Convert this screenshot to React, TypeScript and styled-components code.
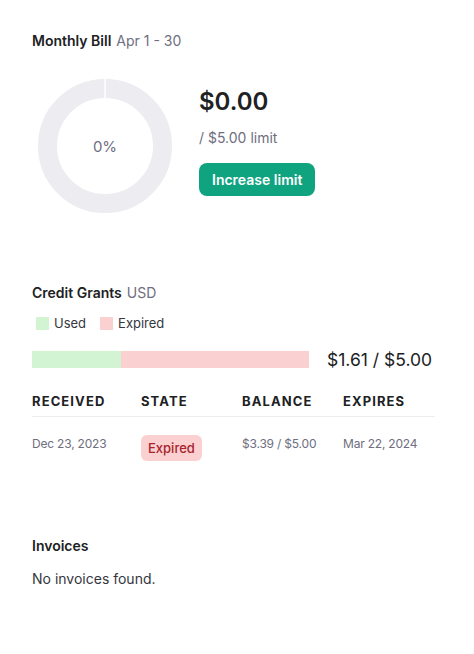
import React from 'react';
import styled, { createGlobalStyle } from 'styled-components';

const GlobalStyle = createGlobalStyle`
  body {
    margin: 0;
    background: #ffffff;
    font-family: Inter, 'Noto Sans', sans-serif;
    color: #202123;
  }
`;

const grants = [
  { received: 'Dec 23, 2023', state: 'Expired', balance: '$3.39 / $5.00', expires: 'Mar 22, 2024' },
];

const used = 1.61;
const limit = 5;

export default function App() {
  return (
    <>
      <GlobalStyle />
      <Page>
        <Section>
          <Heading>
            <Title>Monthly Bill</Title>
            <Sub>Apr 1 - 30</Sub>
          </Heading>
          <BillRow>
            <Donut>
              <svg width="136" height="136" viewBox="0 0 136 136">
                <circle cx="68" cy="68" r="57.5" fill="none" stroke="#ececf1" strokeWidth="19" />
                <line x1="68" y1="0" x2="68" y2="20" stroke="#ffffff" strokeWidth="1.5" />
              </svg>
              <DonutLabel>0%</DonutLabel>
            </Donut>
            <BillInfo>
              <Amount>$0.00</Amount>
              <Limit>/ $5.00 limit</Limit>
              <Button>Increase limit</Button>
            </BillInfo>
          </BillRow>
        </Section>

        <Section>
          <Heading>
            <Title>Credit Grants</Title>
            <Sub>USD</Sub>
          </Heading>
          <Legend>
            <LegendItem>
              <Swatch color="#d2f4d3" />
              Used
            </LegendItem>
            <LegendItem>
              <Swatch color="#fbd0d0" />
              Expired
            </LegendItem>
          </Legend>
          <BarRow>
            <Bar>
              <UsedPart style={{ width: `${(used / limit) * 100}%` }} />
            </Bar>
            <BarValue>$1.61 / $5.00</BarValue>
          </BarRow>
          <Table>
            <thead>
              <tr>
                <Th>Received</Th>
                <Th>State</Th>
                <Th>Balance</Th>
                <Th>Expires</Th>
              </tr>
            </thead>
            <tbody>
              {grants.map((g) => (
                <tr key={g.received}>
                  <Td>{g.received}</Td>
                  <Td>
                    <Badge>{g.state}</Badge>
                  </Td>
                  <Td>{g.balance}</Td>
                  <Td>{g.expires}</Td>
                </tr>
              ))}
            </tbody>
          </Table>
        </Section>

        <Section>
          <Title>Invoices</Title>
          <Empty>No invoices found.</Empty>
        </Section>
      </Page>
    </>
  );
}

const Page = styled.div`
  width: 474px;
  height: 654px;
  padding: 31px 39px 0 32px;
  box-sizing: border-box;
`;

const Section = styled.section`
  margin-bottom: 69px;

  &:nth-child(2) {
    margin-bottom: 63px;
  }
`;

const Heading = styled.div`
  display: flex;
  align-items: baseline;
  gap: 5px;
`;

const Title = styled.div`
  font-size: 14px;
  font-weight: 600;
  color: #202123;
  line-height: 20px;
`;

const Sub = styled.span`
  font-size: 14px;
  color: #6e6e80;
  line-height: 20px;
`;

const BillRow = styled.div`
  display: flex;
  align-items: flex-start;
  gap: 26px;
  margin-top: 27px;
  padding-left: 5px;
`;

const Donut = styled.div`
  position: relative;
  width: 136px;
  height: 136px;
  flex-shrink: 0;
`;

const DonutLabel = styled.span`
  position: absolute;
  inset: 0;
  display: flex;
  align-items: center;
  justify-content: center;
  font-size: 15px;
  color: #6e6e80;
`;

const BillInfo = styled.div`
  display: flex;
  flex-direction: column;
  align-items: flex-start;
  padding-top: 8px;
`;

const Amount = styled.div`
  font-size: 24px;
  font-weight: 600;
  line-height: 32px;
  color: #202123;
`;

const Limit = styled.div`
  margin-top: 10px;
  font-size: 14px;
  line-height: 20px;
  color: #6e6e80;
`;

const Button = styled.button`
  margin-top: 15px;
  height: 33px;
  padding: 0 13px;
  border: none;
  border-radius: 8px;
  background: #10a37f;
  color: #ffffff;
  font-family: inherit;
  font-size: 14px;
  font-weight: 600;
  cursor: pointer;
`;

const Legend = styled.div`
  display: flex;
  gap: 14px;
  margin-top: 11px;
  padding-left: 4px;
`;

const LegendItem = styled.div`
  display: flex;
  align-items: center;
  gap: 5px;
  font-size: 13px;
  color: #353740;
  line-height: 18px;
`;

const Swatch = styled.span<{ color: string }>`
  width: 13px;
  height: 13px;
  background: ${(p) => p.color};
`;

const BarRow = styled.div`
  display: flex;
  align-items: center;
  gap: 18px;
  margin-top: 17px;
`;

const Bar = styled.div`
  width: 277px;
  height: 17px;
  background: #fbd0d0;
  display: flex;
`;

const UsedPart = styled.div`
  height: 100%;
  background: #d2f4d3;
`;

const BarValue = styled.div`
  font-size: 17.5px;
  color: #202123;
`;

const Table = styled.table`
  width: 100%;
  margin-top: 19px;
  border-collapse: collapse;
  table-layout: fixed;

  th:nth-child(1) { width: 109px; }
  th:nth-child(2) { width: 101px; }
  th:nth-child(3) { width: 101px; }
`;

const Th = styled.th`
  text-align: left;
  font-size: 13px;
  font-weight: 700;
  letter-spacing: 1.1px;
  text-transform: uppercase;
  color: #202123;
  padding: 4px 0 7px;
  border-bottom: 1px solid #ececf1;
`;

const Td = styled.td`
  font-size: 12px;
  line-height: 15px;
  letter-spacing: -0.2px;
  color: #6e6e80;
  padding: 19px 0 12px;
  vertical-align: top;
`;

const Badge = styled.span`
  display: inline-block;
  vertical-align: top;
  margin-top: -1px;
  padding: 5px 7px;
  border-radius: 6px;
  background: #fbd0d0;
  color: #a8232c;
  font-size: 13px;
  line-height: 16px;
  letter-spacing: 0;
  font-weight: 500;
`;

const Empty = styled.div`
  margin-top: 14px;
  font-size: 14px;
  color: #353740;
`;
